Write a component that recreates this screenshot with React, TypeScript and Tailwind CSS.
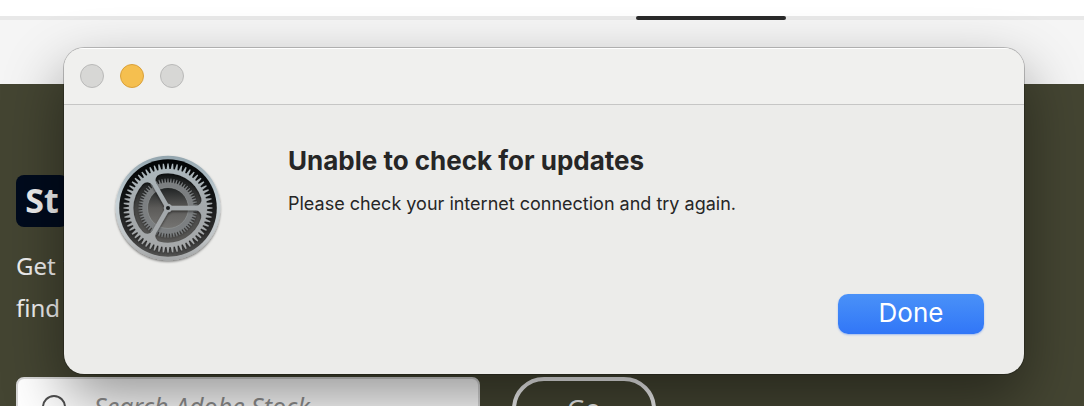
import { useId } from "react";

function gearOutline(teeth: number, outer: number, inner: number) {
  const points: string[] = [];
  const step = (Math.PI * 2) / teeth;
  // each tooth tapers from a wide root to a narrow tip
  const profile: [number, number][] = [
    [-0.32, inner],
    [-0.13, outer],
    [0.13, outer],
    [0.32, inner],
  ];
  for (let i = 0; i < teeth; i++) {
    for (const [offset, radius] of profile) {
      const angle = (i + offset) * step;
      points.push(
        `${(Math.cos(angle) * radius).toFixed(2)} ${(Math.sin(angle) * radius).toFixed(2)}`
      );
    }
  }
  return `M${points.join("L")}Z`;
}

const LARGE_GEAR = gearOutline(60, 44.5, 39);
const SMALL_GEAR = gearOutline(60, 29.5, 25.5);
const CUTOUT =
  "M1.3 2.2L27.5 2.2A6 6 0 0 1 33.2 9.9A34.7 34.7 0 0 1 -8 33.8A6 6 0 0 1 -11.9 24.9Z";

function SettingsIcon({ className }: { className?: string }) {
  const id = useId();

  return (
    <svg viewBox="-56 -56 112 112" className={className} aria-hidden="true">
      <defs>
        <linearGradient id={`${id}rim`} x1="0" y1="0" x2="0" y2="1">
          <stop offset="0" stopColor="#93a5ae" />
          <stop offset="0.45" stopColor="#c8d3d8" />
          <stop offset="0.8" stopColor="#bfc3c5" />
          <stop offset="1" stopColor="#a3a5a6" />
        </linearGradient>
        <linearGradient id={`${id}well`} x1="0" y1="0" x2="0" y2="1">
          <stop offset="0" stopColor="#020405" />
          <stop offset="0.4" stopColor="#111415" />
          <stop offset="0.75" stopColor="#303030" />
          <stop offset="1" stopColor="#545453" />
        </linearGradient>
        <linearGradient id={`${id}gear`} x1="0" y1="0" x2="0" y2="1">
          <stop offset="0" stopColor="#adb9be" />
          <stop offset="0.5" stopColor="#a3a8ab" />
          <stop offset="1" stopColor="#a6a8a9" />
        </linearGradient>
        <linearGradient id={`${id}back`} x1="0" y1="0" x2="0" y2="1">
          <stop offset="0" stopColor="#101314" />
          <stop offset="0.5" stopColor="#454544" />
          <stop offset="1" stopColor="#5c5b59" />
        </linearGradient>
        <linearGradient id={`${id}core`} x1="0" y1="0" x2="0" y2="1">
          <stop offset="0" stopColor="#1f2223" />
          <stop offset="0.5" stopColor="#5c5b59" />
          <stop offset="1" stopColor="#757472" />
        </linearGradient>
        <filter id={`${id}shadow`} x="-20%" y="-20%" width="140%" height="140%">
          <feDropShadow dx="0" dy="1.5" stdDeviation="1" floodOpacity="0.5" />
        </filter>
        <mask id={`${id}spokes`} maskUnits="userSpaceOnUse" x="-56" y="-56" width="112" height="112">
          <rect x="-56" y="-56" width="112" height="112" fill="#fff" />
          <path d={CUTOUT} />
          <path d={CUTOUT} transform="rotate(120)" />
          <path d={CUTOUT} transform="rotate(240)" />
          <circle r="4.2" fill="#fff" />
        </mask>
      </defs>
      <circle r="52.3" fill={`url(#${id}rim)`} filter={`url(#${id}shadow)`} />
      <circle r="48.8" fill={`url(#${id}well)`} />
      <circle r="36" fill={`url(#${id}back)`} />
      <path d={SMALL_GEAR} fill="#7b7f81" filter={`url(#${id}shadow)`} />
      <circle r="20.5" fill={`url(#${id}core)`} stroke="#8f9394" strokeWidth="0.7" />
      <g filter={`url(#${id}shadow)`}>
        <g mask={`url(#${id}spokes)`}>
          <path d={LARGE_GEAR} fill={`url(#${id}gear)`} />
        </g>
      </g>
      <circle r="2" fill="#1b1e1f" />
    </svg>
  );
}

function StockPage() {
  return (
    <div className="flex h-full flex-col bg-[#f5f5f5] font-['Noto_Sans','Open_Sans',sans-serif]">
      <header className="bg-white pt-4">
        <div className="h-1 bg-[#e8e8e8] pl-[636px]">
          <div className="h-1 w-[150px] rounded-sm bg-[#292929]" />
        </div>
      </header>
      <main className="mt-16 flex-1 bg-[#444532] px-4 pt-[91px] text-[#f0f0f0]">
        <div className="flex size-[52px] items-center justify-center rounded-lg bg-[#000b1d] pb-0.5 text-[34px] leading-none font-bold">
          St
        </div>
        <p className="mt-[18px] text-[24px] leading-[42px]">
          Get 10 free assets and
          <br />
          find the perfect image.
        </p>
        <form className="mt-12 flex gap-8">
          <label className="flex h-16 w-[464px] items-center gap-6 rounded-lg border-2 border-[#d8d8d8] bg-white px-6">
            <svg viewBox="0 0 28 28" className="size-7 shrink-0" fill="none" stroke="#505050" strokeWidth="2">
              <circle cx="12" cy="12" r="11" />
              <path d="M20 20l7 7" strokeLinecap="round" />
            </svg>
            <input
              type="search"
              aria-label="Search Adobe Stock"
              placeholder="Search Adobe Stock"
              className="min-w-0 flex-1 pb-1 text-[25px] italic placeholder:text-[#909090]"
            />
          </label>
          <button type="button" className="h-16 w-36 rounded-full border-4 border-[#f0f0f0] text-[25px]">
            Go
          </button>
        </form>
      </main>
    </div>
  );
}

function WindowControls() {
  return (
    <div className="flex gap-4">
      <button type="button" aria-label="Close" className="size-6 rounded-full border border-[#b9b9b8] bg-[#d7d7d5]" />
      <button type="button" aria-label="Minimize" className="size-6 rounded-full border border-[#d9a03b] bg-[#f5bf4f]" />
      <button type="button" aria-label="Zoom" className="size-6 rounded-full border border-[#b9b9b8] bg-[#d7d7d5]" />
    </div>
  );
}

function UpdateDialog() {
  return (
    <div
      role="alertdialog"
      aria-labelledby="dialog-title"
      aria-describedby="dialog-message"
      className="absolute top-12 right-[60px] left-16 overflow-hidden rounded-[20px] bg-[#ececea] font-[Inter,sans-serif] text-[#262626] shadow-[0_0_0_1px_rgba(0,0,0,0.22),0_25px_60px_rgba(0,0,0,0.42)]"
    >
      <div className="flex h-[57px] items-center border-b border-[#c6c6c5] bg-[#f0f0ee] px-4 shadow-[inset_0_1px_0_#ffffff]">
        <WindowControls />
      </div>
      <div className="pt-10 pr-10 pb-10 pl-12">
        <div className="flex gap-16">
          <SettingsIcon className="mt-[7px] size-28 shrink-0" />
          <div>
            <h1 id="dialog-title" className="text-[26px] leading-8 font-bold">
              Unable to check for updates
            </h1>
            <p id="dialog-message" className="mt-[15px] text-[18px] leading-6">
              Please check your internet connection and try again.
            </p>
          </div>
        </div>
        <div className="mt-[30px] flex justify-end">
          <button
            type="button"
            className="h-10 w-[146px] rounded-[10px] bg-linear-to-b from-[#4a91f8] to-[#3176f7] pb-0.5 text-[26px] leading-8 text-white shadow-[0_1px_2px_rgba(49,118,247,0.4)]"
          >
            Done
          </button>
        </div>
      </div>
    </div>
  );
}

export default function App() {
  return (
    <div className="relative h-screen overflow-hidden">
      <StockPage />
      <UpdateDialog />
    </div>
  );
}
